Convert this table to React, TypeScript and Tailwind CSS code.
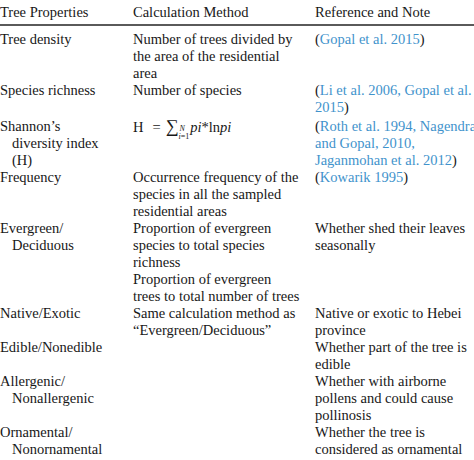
const Cite = ({ children }: { children: React.ReactNode }) => (
  <span className="text-[#3f93cc]">{children}</span>
);

type Row = {
  prop: string[];
  method: React.ReactNode[];
  note: React.ReactNode[];
  extra?: string;
};

const rows: Row[] = [
  {
    prop: ["Tree density"],
    method: ["Number of trees divided by", "the area of the residential", "area"],
    note: [
      <>
        (<Cite>Gopal et al. 2015</Cite>)
      </>,
    ],
  },
  {
    prop: ["Species richness"],
    method: ["Number of species"],
    note: [
      <>
        (<Cite>Li et al. 2006, Gopal et al.</Cite>
      </>,
      <>
        <Cite>2015</Cite>)
      </>,
    ],
  },
  {
    prop: ["Shannon’s", "diversity index", "(H)"],
    method: [
      <span className="inline-flex items-baseline">
        <span>H</span>
        <span className="ml-[9px] mr-[5px]">=</span>
        <span className="text-[18px] leading-[17px]">∑</span>
        <span className="inline-flex flex-col text-[8px] leading-[8px] -translate-y-[1px]">
          <span className="italic pl-[1px]">N</span>
          <span>
            <span className="italic">i</span>=1
          </span>
        </span>
        <span className="italic font-medium ml-[1px]">pi</span>
        <span>*ln</span>
        <span className="italic font-medium">pi</span>
      </span>,
    ],
    note: [
      <>
        (<Cite>Roth et al. 1994, Nagendra</Cite>
      </>,
      <Cite>and Gopal, 2010,</Cite>,
      <>
        <Cite>Jaganmohan et al. 2012</Cite>)
      </>,
    ],
    extra: "pt-[2px]",
  },
  {
    prop: ["Frequency"],
    method: [
      "Occurrence frequency of the",
      "species in all the sampled",
      "residential areas",
    ],
    note: [
      <>
        (<Cite>Kowarik 1995</Cite>)
      </>,
    ],
  },
  {
    prop: ["Evergreen/", "Deciduous"],
    method: [
      "Proportion of evergreen",
      "species to total species",
      "richness",
      "Proportion of evergreen",
      "trees to total number of trees",
    ],
    note: ["Whether shed their leaves", "seasonally"],
  },
  {
    prop: ["Native/Exotic"],
    method: ["Same calculation method as", "“Evergreen/Deciduous”"],
    note: ["Native or exotic to Hebei", "province"],
  },
  {
    prop: ["Edible/Nonedible"],
    method: [],
    note: ["Whether part of the tree is", "edible"],
  },
  {
    prop: ["Allergenic/", "Nonallergenic"],
    method: [],
    note: ["Whether with airborne", "pollens and could cause", "pollinosis"],
  },
  {
    prop: ["Ornamental/", "Nonornamental"],
    method: [],
    note: ["Whether the tree is", "considered as ornamental"],
  },
];

const Lines = ({ items, indent }: { items: React.ReactNode[]; indent?: boolean }) => (
  <div className="flex flex-col">
    {items.map((item, i) => (
      <div key={i} className={`whitespace-nowrap ${indent && i > 0 ? "pl-[12px]" : ""}`}>
        {item}
      </div>
    ))}
  </div>
);

export default function App() {
  return (
    <div
      className="w-[474px] h-[460px] overflow-hidden bg-white text-[#181818] text-[14.5px] leading-[17px]"
      style={{ fontFamily: '"Liberation Serif", "Times New Roman", serif' }}
    >
      <div className="grid grid-cols-[133px_182px_1fr] pt-[4px] pb-[3px] border-b-[2px] border-[#5a5a5a]">
        <div>Tree Properties</div>
        <div>Calculation Method</div>
        <div className="whitespace-nowrap">Reference and Note</div>
      </div>
      <div className="flex flex-col pt-[5px]">
        {rows.map((row) => (
          <div
            key={row.prop.join("")}
            className={`grid grid-cols-[133px_182px_1fr] ${row.extra ?? ""}`}
          >
            <Lines items={row.prop} indent />
            <Lines items={row.method} />
            <Lines items={row.note} />
          </div>
        ))}
      </div>
    </div>
  );
}
